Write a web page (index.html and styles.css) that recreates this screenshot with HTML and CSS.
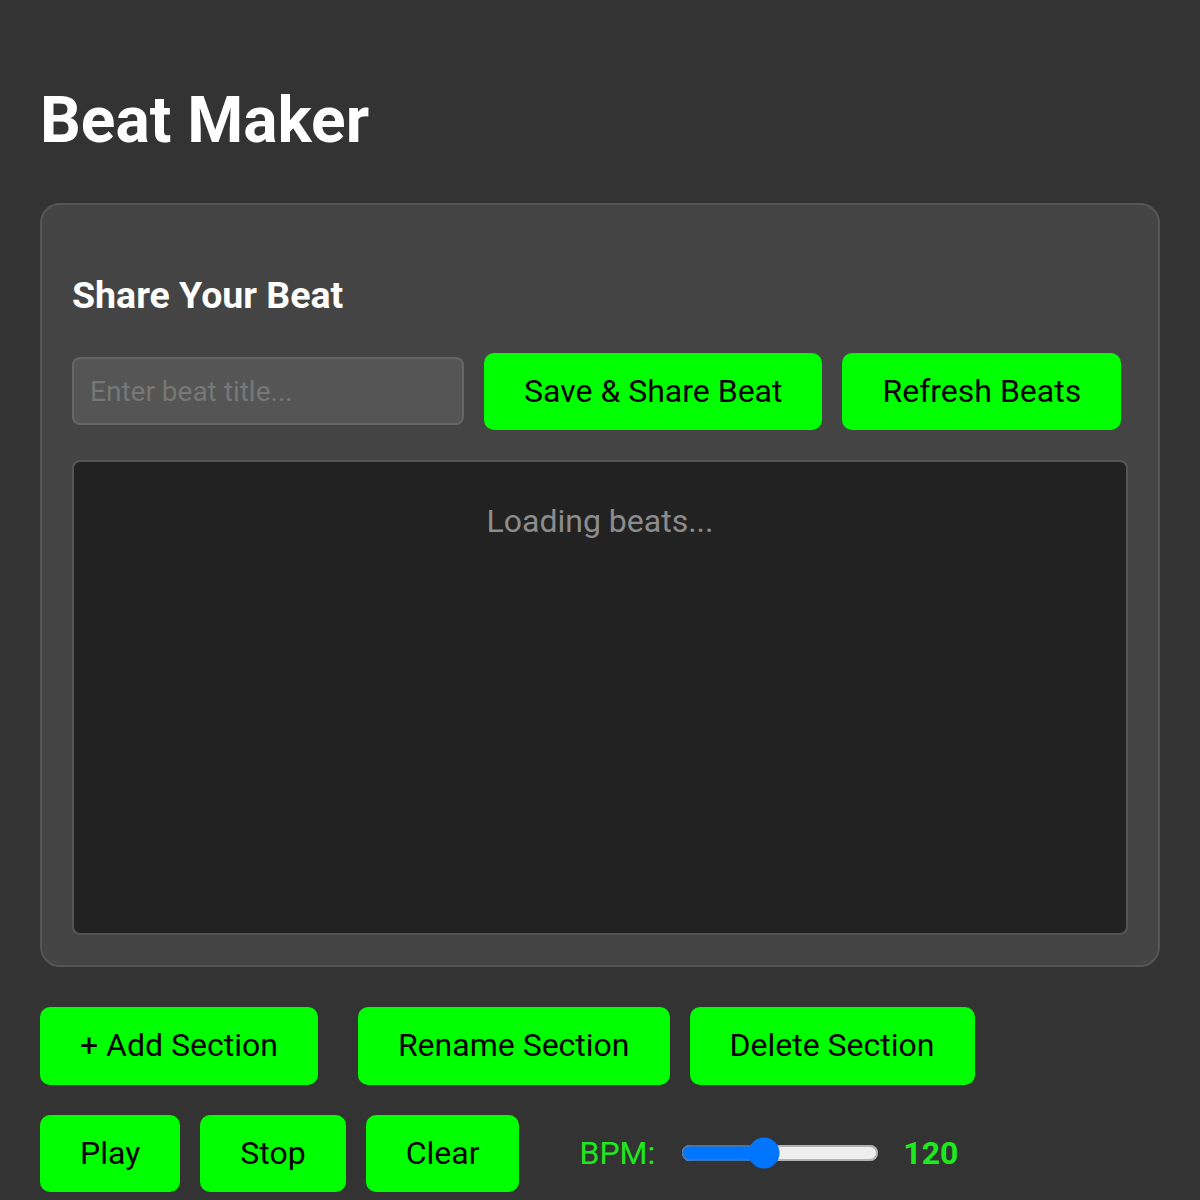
FILE: index.html
```html
<!DOCTYPE html>
<html lang="en">
<head>
    <meta charset="UTF-8">
    <meta name="viewport" content="width=device-width, initial-scale=1.0">
    <title>Beat Maker</title>
    <link rel="stylesheet" href="styles.css">
</head>
<body>
    <h1>Beat Maker</h1>

    <div class="share-panel">
        <h3>Share Your Beat</h3>
        <div class="share-row">
            <input type="text" id="beatTitle" placeholder="Enter beat title...">
            <button>Save &amp; Share Beat</button>
            <button>Refresh Beats</button>
        </div>
        <div id="beatsList" class="beats-list">Loading beats...</div>
    </div>

    <div class="section-controls">
        <button class="add-section">+ Add Section</button>
        <button>Rename Section</button>
        <button>Delete Section</button>
    </div>

    <div class="controls">
        <button>Play</button>
        <button>Stop</button>
        <button>Clear</button>
        <div class="bpm-control">
            <label for="bpm">BPM:</label>
            <input type="range" id="bpm" min="40" max="240" value="120">
            <span id="bpmValue" class="bpm-value">120</span>
        </div>
    </div>
</body>
</html>
```

FILE: styles.css
```css
body {
    margin: 0;
    padding: 40px;
    background-color: #333;
    color: white;
    font-family: Roboto, "Liberation Sans", sans-serif;
}
h1 {
    font-size: 64px;
    margin: 43px 0 45px;
}
h3 {
    font-size: 37.5px;
    margin: 37.5px 0 36px;
}
.share-panel {
    background-color: #444;
    border: 2px solid #555;
    border-radius: 20px;
    padding: 30px;
    margin-bottom: 40px;
}
.share-row {
    display: flex;
    align-items: center;
    gap: 20px;
    margin-bottom: 30px;
}
.share-row input {
    box-sizing: border-box;
    width: 392px;
    height: 68px;
    padding: 0 16px;
    background-color: #555;
    border: 2px solid #666;
    border-radius: 8px;
    color: white;
    font-family: inherit;
    font-size: 28px;
}
.share-row input::placeholder {
    color: #777;
}
button {
    padding: 20px 40px;
    background-color: #00ff00;
    color: black;
    border: none;
    border-radius: 10px;
    font-family: inherit;
    font-size: 32px;
    line-height: 37.5px;
    cursor: pointer;
}
button:hover {
    background-color: #00dd00;
}
.beats-list {
    box-sizing: border-box;
    height: 475px;
    padding: 40px;
    background-color: #222;
    border: 2px solid #555;
    border-radius: 8px;
    color: #8c8c8c;
    font-size: 32px;
    text-align: center;
}
.section-controls {
    display: flex;
    gap: 20px;
    margin-bottom: 30px;
}
.add-section {
    margin-right: 20px;
}
.controls {
    display: flex;
    align-items: center;
    gap: 20px;
}
.bpm-control {
    display: flex;
    align-items: center;
    gap: 20px;
    margin-left: 40px;
    color: #1ee81e;
    font-size: 32px;
}
.bpm-control input {
    zoom: 2;
    width: 99px;
    margin: 0 2px 0 3px;
}
.bpm-value {
    font-weight: bold;
}
```
